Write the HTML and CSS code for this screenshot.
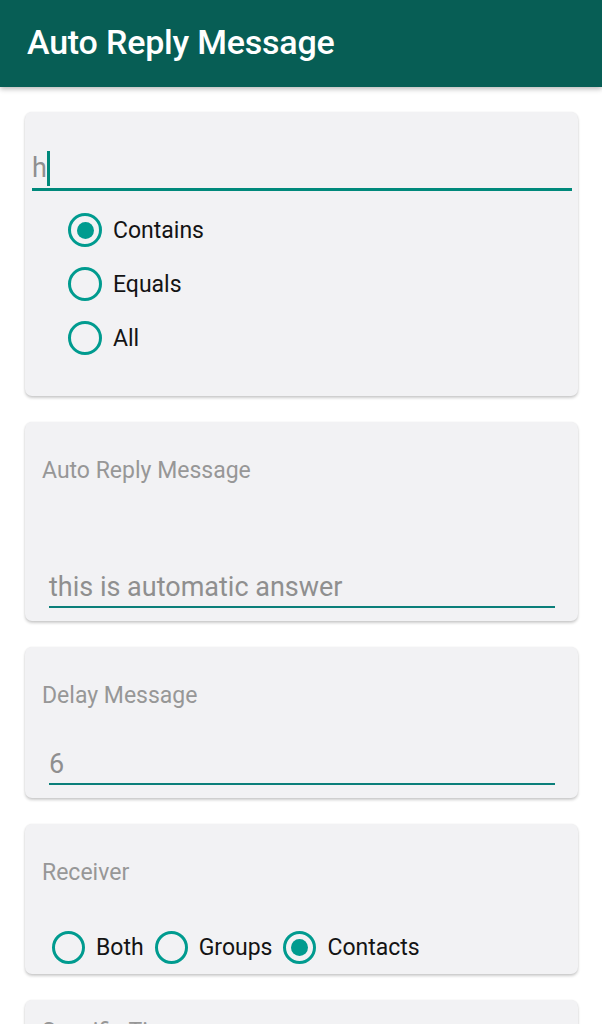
FILE: index.html
```html
<!DOCTYPE html>
<html lang="en">
<head>
<meta charset="utf-8">
<title>Auto Reply Message</title>
<link rel="stylesheet" href="styles.css">
</head>
<body>
<header class="appbar">
  <h1 class="appbar-title">Auto Reply Message</h1>
</header>
<main class="content">
  <section class="card card-keyword">
    <div class="field field-active">
      <span class="field-value">h</span><span class="caret"></span>
    </div>
    <div class="radio-list">
      <div class="radio-row"><span class="radio radio-checked"></span><span class="radio-label">Contains</span></div>
      <div class="radio-row"><span class="radio"></span><span class="radio-label">Equals</span></div>
      <div class="radio-row"><span class="radio"></span><span class="radio-label">All</span></div>
    </div>
  </section>

  <section class="card card-text">
    <div class="card-label">Auto Reply Message</div>
    <div class="field field-multi">
      <span class="field-value">this is automatic answer</span>
    </div>
  </section>

  <section class="card card-text">
    <div class="card-label">Delay Message</div>
    <div class="field field-single">
      <span class="field-value">6</span>
    </div>
  </section>

  <section class="card card-receiver">
    <div class="card-label">Receiver</div>
    <div class="radio-inline">
      <div class="radio-item"><span class="radio radio-sm"></span><span class="radio-label">Both</span></div>
      <div class="radio-item"><span class="radio radio-sm"></span><span class="radio-label">Groups</span></div>
      <div class="radio-item"><span class="radio radio-sm radio-checked"></span><span class="radio-label">Contacts</span></div>
    </div>
  </section>

  <section class="card card-time">
    <div class="card-label">Specific Time</div>
    <div class="card-spacer"></div>
  </section>
</main>
</body>
</html>
```

FILE: styles.css
```css
* {
  box-sizing: border-box;
}

html, body {
  margin: 0;
  padding: 0;
  background: #ffffff;
  font-family: Roboto, "Liberation Sans", Arial, sans-serif;
  overflow: hidden;
}

.appbar {
  height: 87px;
  background: #075e55;
  display: flex;
  align-items: center;
  padding: 0 0 4px 27px;
  box-shadow: 0 2px 5px rgba(0, 0, 0, 0.28);
  position: relative;
  z-index: 1;
}

.appbar-title {
  margin: 0;
  font-size: 34px;
  line-height: 40px;
  font-weight: 500;
  color: #ffffff;
  letter-spacing: -0.2px;
}

.content {
  padding: 25px 24px 0 25px;
  display: flex;
  flex-direction: column;
  gap: 26px;
}

.card {
  background: #f2f2f4;
  border-radius: 7px;
  box-shadow: 0 2px 3px rgba(0, 0, 0, 0.2), 0 0 2px rgba(0, 0, 0, 0.07);
}

/* keyword card */
.card-keyword {
  padding: 38px 6px 31px 7px;
}

.field {
  display: flex;
  align-items: center;
  font-size: 27px;
  line-height: 36px;
  color: #8f8f8f;
}

.field-active {
  padding-bottom: 2px;
  border-bottom: 3px solid #00897b;
}

.caret {
  display: inline-block;
  width: 3px;
  height: 35px;
  background: #00897b;
  margin-left: 0;
}

.radio-list {
  margin: 12px 0 0 36px;
  display: flex;
  flex-direction: column;
}

.radio-row {
  height: 54px;
  display: flex;
  align-items: center;
  gap: 11px;
}

.radio {
  width: 34px;
  height: 34px;
  border: 3.4px solid #009b8f;
  border-radius: 50%;
  display: flex;
  align-items: center;
  justify-content: center;
  flex: none;
}

.radio-sm {
  width: 33px;
  height: 33px;
}

.radio-checked::after {
  content: "";
  width: 17px;
  height: 17px;
  border-radius: 50%;
  background: #009b8f;
}

.radio-label {
  font-size: 23px;
  line-height: 27px;
  color: #141414;
}

/* text cards */
.card-text {
  padding: 35px 23px 13px 17px;
}

.card-label {
  font-size: 23px;
  line-height: 27px;
  color: #979797;
}

.card-text .field {
  margin-left: 7px;
  padding-bottom: 1px;
  border-bottom: 2px solid #0b7f7a;
}

.field-multi {
  margin-top: 85px;
}

.field-single {
  margin-top: 37px;
}

/* receiver card */
.card-receiver {
  padding: 35px 17px 10px 17px;
}

.radio-inline {
  margin: 45px 0 0 10px;
  display: flex;
  align-items: center;
  gap: 11px;
}

.radio-item {
  display: flex;
  align-items: center;
  gap: 11px;
}

/* time card */
.card-time {
  padding: 18px 17px 20px 17px;
}

.card-spacer {
  height: 120px;
}
```
